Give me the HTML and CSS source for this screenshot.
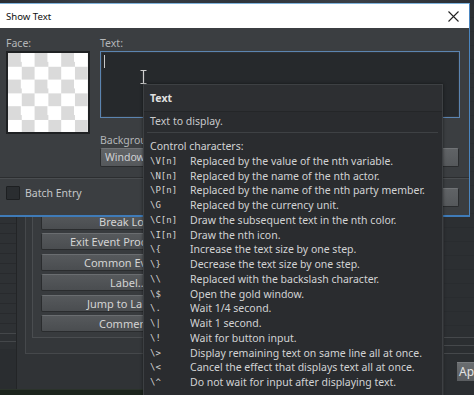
FILE: index.html
```html
<!DOCTYPE html>
<html>
<head>
<meta charset="utf-8">
<link rel="stylesheet" href="styles.css">
</head>
<body>
<div class="app">
  <div class="topstrip"></div>
  <div class="appmain">
    <div class="stripes">
      <div class="stripe-fill"></div>
      <div class="stripe-line"></div>
      <div class="stripe-line"></div>
    </div>
    <div class="outerpanel">
      <div class="innerpanel">
        <div class="cmdbtn"><span class="cmdtext">Break Loop</span></div>
        <div class="cmdbtn"><span class="cmdtext t-exit">Exit Event Processing</span></div>
        <div class="cmdbtn"><span class="cmdtext t-common">Common Event...</span></div>
        <div class="cmdbtn"><span class="cmdtext t-label">Label...</span></div>
        <div class="cmdbtn"><span class="cmdtext t-jump">Jump to Label...</span></div>
        <div class="cmdbtn"><span class="cmdtext t-comment">Comment...</span></div>
      </div>
    </div>
    <div class="rightcol">
      <div class="rc-fill"></div>
      <div class="rc-line"></div>
      <div class="rc-line"></div>
      <div class="rc-line"></div>
      <div class="apbtn">Apply</div>
    </div>
  </div>
  <div class="greenstrip"></div>

  <div class="dialog">
    <div class="titlebar">
      <span class="title">Show Text</span>
      <svg class="close" width="11" height="11" viewBox="0 0 11 11"><path d="M0.5 0.5L10.5 10.5M10.5 0.5L0.5 10.5" stroke="#222" stroke-width="1.1" fill="none"/></svg>
    </div>
    <div class="dbody">
      <div class="toprow">
        <div class="facecol">
          <div class="lbl">Face:</div>
          <div class="facebox"><div class="checker"></div></div>
        </div>
        <div class="textcol">
          <div class="lbl">Text:</div>
          <div class="textarea">
            <div class="caret"></div>
            <svg class="ibeam" width="7" height="14" viewBox="0 0 7 14"><path d="M0.5 0.5H6.5M3.5 0.5V13.5M0.5 13.5H6.5" stroke="#cfcfcf" stroke-width="1.2" fill="none"/></svg>
          </div>
          <div class="bgrow">
            <div class="bgcol">
              <div class="lbl">Background:</div>
              <div class="btn">Window</div>
            </div>
            <div class="btn">Preview...</div>
          </div>
        </div>
      </div>
      <div class="sep"></div>
      <div class="batchrow">
        <div class="check"></div>
        <span class="batchlbl">Batch Entry</span>
        <div class="btn okbtn">OK</div>
      </div>
    </div>
  </div>

  <div class="tooltip">
    <div class="tt-head">Text</div>
    <div class="tt-desc">Text to display.</div>
    <div class="tt-sep"></div>
    <div class="tt-list">
      <div class="tt-cc">Control characters:</div>
      <div class="cc"><span class="code">\V[n]</span><span class="txt">Replaced by the value of the nth variable.</span></div>
      <div class="cc"><span class="code">\N[n]</span><span class="txt">Replaced by the name of the nth actor.</span></div>
      <div class="cc"><span class="code">\P[n]</span><span class="txt">Replaced by the name of the nth party member.</span></div>
      <div class="cc"><span class="code">\G</span><span class="txt">Replaced by the currency unit.</span></div>
      <div class="cc"><span class="code">\C[n]</span><span class="txt">Draw the subsequent text in the nth color.</span></div>
      <div class="cc"><span class="code">\I[n]</span><span class="txt">Draw the nth icon.</span></div>
      <div class="cc"><span class="code">\{</span><span class="txt">Increase the text size by one step.</span></div>
      <div class="cc"><span class="code">\}</span><span class="txt">Decrease the text size by one step.</span></div>
      <div class="cc"><span class="code">\\</span><span class="txt">Replaced with the backslash character.</span></div>
      <div class="cc"><span class="code">\$</span><span class="txt">Open the gold window.</span></div>
      <div class="cc"><span class="code">\.</span><span class="txt">Wait 1/4 second.</span></div>
      <div class="cc"><span class="code">\|</span><span class="txt">Wait 1 second.</span></div>
      <div class="cc"><span class="code">\!</span><span class="txt">Wait for button input.</span></div>
      <div class="cc"><span class="code">\&gt;</span><span class="txt">Display remaining text on same line all at once.</span></div>
      <div class="cc"><span class="code">\&lt;</span><span class="txt">Cancel the effect that displays text all at once.</span></div>
      <div class="cc"><span class="code">\^</span><span class="txt">Do not wait for input after displaying text.</span></div>
    </div>
  </div>
</div>
</body>
</html>
```
FILE: styles.css
```css
* { box-sizing: border-box; }
html, body { margin: 0; padding: 0; }
body {
  width: 474px;
  height: 395px;
  overflow: hidden;
  background: #2c2f32;
  font-family: "Noto Sans", "Open Sans", sans-serif;
}
.app {
  position: relative;
  width: 474px;
  height: 395px;
  overflow: hidden;
  display: flex;
  flex-direction: column;
  background: #303336;
}
.topstrip {
  height: 4px;
  background: linear-gradient(90deg, #2a2d33 0%, #3a4048 20%, #2f343b 50%, #3b3f46 75%, #2a2e34 100%);
}
.appmain {
  flex: 1;
  display: flex;
  min-height: 0;
}
.stripes {
  width: 17px;
  flex-shrink: 0;
  display: flex;
  flex-direction: column;
  background: #2a2d30;
  border-right: 1px solid #232527;
}
.stripe-fill {
  height: 329px;
  background: repeating-linear-gradient(180deg, #2e3134 0 9px, #282a2d 9px 10px);
}
.stripe-line {
  height: 8px;
  border-top: 1px solid #44474a;
  background: #2d3033;
}
.outerpanel {
  width: 418px;
  flex-shrink: 0;
  margin-left: 8px;
  height: 350px;
  border-left: 1px solid #45484b;
  border-bottom: 1px solid #45484b;
  padding: 0 0 15px 6px;
  background: #34373a;
}
.innerpanel {
  height: 100%;
  border-left: 1px solid #4a4d50;
  border-bottom: 1px solid #4a4d50;
  background: #383b3e;
  display: flex;
  flex-direction: column;
  justify-content: flex-end;
  gap: 3.5px;
  padding: 0 0 5px 8px;
}
.cmdbtn {
  height: 17px;
  width: 220px;
  background: linear-gradient(180deg, #56595c, #4a4d50);
  border: 1px solid #2a2c2e;
  border-top-color: #6a6d70;
  border-radius: 2px;
  position: relative;
  color: #d4d4d4;
  font-size: 11px;
  line-height: 15px;
}
.cmdtext { position: absolute; top: 0; left: 57px; white-space: nowrap; }
.t-exit { left: 28px; }
.t-common { left: 42px; }
.t-label { left: 68px; }
.t-jump { left: 45px; }
.t-comment { left: 57px; }
.rightcol {
  flex: 1;
  min-width: 0;
  overflow: hidden;
  display: flex;
  flex-direction: column;
  background: #2b2e31;
  border-left: 1px solid #3c3f42;
}
.rc-fill {
  height: 333px;
  flex-shrink: 0;
  background: repeating-linear-gradient(180deg, #2c2f32 0 13px, #292c2f 13px 14px);
}
.rc-line { height: 8px; flex-shrink: 0; border-top: 1px solid #45484b; }
.apbtn {
  flex-shrink: 0;
  margin-top: 1px;
  margin-left: 13px;
  width: 40px;
  height: 19px;
  background: linear-gradient(180deg, #6a6d70, #5a5d60);
  border-top: 1px solid #7a7d80;
  color: #e4e4e4;
  font-size: 12px;
  line-height: 17px;
  padding-left: 2px;
  white-space: nowrap;
  overflow: hidden;
}
.greenstrip {
  position: absolute;
  left: 0;
  bottom: 0;
  width: 145px;
  height: 6px;
  background: #1c241d;
  border-top: 1px solid #2b332b;
}

/* Dialog window */
.dialog {
  position: absolute;
  left: 0;
  top: 3px;
  width: 470px;
  height: 214px;
  border-top: 1px solid #7fb3dc;
  border-right: 1px solid #4b86c0;
  border-bottom: 2px solid #3f7bb8;
  display: flex;
  flex-direction: column;
  background: #3b3e41;
  overflow: hidden;
}
.titlebar {
  height: 24px;
  background: #ffffff;
  display: flex;
  align-items: center;
  justify-content: space-between;
  padding: 0 10px 0 6px;
  flex-shrink: 0;
}
.title {
  font-family: "Noto Sans", sans-serif;
  font-size: 9.6px;
  color: #111;
}
.close { display: block; }
.dbody {
  flex: 1;
  padding: 8px 9px 0 6px;
  display: flex;
  flex-direction: column;
}
.lbl {
  font-size: 10.5px;
  line-height: 14px;
  height: 14px;
  color: #b4b6b8;
  white-space: nowrap;
}
.toprow {
  display: flex;
  gap: 10px;
  align-items: flex-start;
}
.facecol { width: 84px; }
.facebox {
  margin-top: 1px;
  height: 83px;
  border: 2px solid #1f2123;
  background: #fff;
}
.checker {
  width: 100%;
  height: 100%;
  background: repeating-conic-gradient(#ffffff 0 25%, #dadada 0 50%) 0 0 / 26.6px 26.6px;
}
.textcol { flex: 1; min-width: 0; }
.textarea {
  margin-top: 1px;
  height: 67px;
  border: 1px solid #5b84b0;
  background: #26292c;
  position: relative;
  box-shadow: inset 0 0 0 1px #2f3236;
}
.caret {
  position: absolute;
  left: 3px;
  top: 3px;
  width: 1px;
  height: 13px;
  background: #c8c8c8;
}
.ibeam { position: absolute; left: 39px; top: 18px; }
.bgrow {
  display: flex;
  align-items: flex-end;
  justify-content: space-between;
  margin-top: 15px;
  padding-right: 1px;
}
.bgcol { display: flex; flex-direction: column; gap: 1px; }
.btn {
  height: 19px;
  background: linear-gradient(180deg, #606366, #55585b);
  border: 1px solid #2a2c2e;
  border-top-color: #707376;
  border-radius: 2px;
  color: #cfd1d3;
  font-size: 10.5px;
  line-height: 16px;
  padding: 0 4px;
  width: 80px;
  white-space: nowrap;
  overflow: hidden;
}
.sep {
  margin: 10px -9px 0 -6px;
  height: 2px;
  border-top: 1px solid #2c2e30;
  border-bottom: 1px solid #4a4d50;
}
.batchrow {
  display: flex;
  align-items: flex-start;
  margin-top: 7px;
  padding-right: 1px;
}
.check {
  width: 14px;
  height: 14px;
  background: #2a2d30;
  border: 1px solid #1d1f21;
  border-radius: 1px;
}
.batchlbl {
  margin-left: 5px;
  font-size: 10.5px;
  line-height: 14px;
  color: #c4c6c8;
  flex: 1;
}
.okbtn { margin-top: 2px; }

/* Tooltip */
.tooltip {
  position: absolute;
  left: 143px;
  top: 84px;
  width: 300px;
  height: 320px;
  background: #2a2c2f;
  border: 1px solid #3d4043;
  color: #d2d3d4;
  font-size: 10.5px;
  box-shadow: 0 0 3px rgba(0,0,0,0.5);
}
.tt-head {
  height: 27px;
  line-height: 27px;
  padding-left: 6px;
  font-weight: bold;
  color: #e0e0e0;
  background: #2d2f32;
  border-bottom: 1px solid #242628;
}
.tt-desc {
  line-height: 16px;
  padding: 1px 0 0 6px;
  color: #c8c9ca;
}
.tt-sep {
  margin: 3px 4px 0 3px;
  height: 1px;
  background: #3e4144;
}
.tt-list {
  padding: 0 0 0 6px;
  margin-top: 6px;
}
.tt-cc {
  line-height: 14.75px;
  height: 14.75px;
  white-space: nowrap;
}
.cc {
  display: grid;
  grid-template-columns: 40px 1fr;
  height: 14.75px;
}
.cc > span {
  display: block;
  height: 14.75px;
  line-height: 14.75px;
  overflow: hidden;
  white-space: nowrap;
}
.code {
  font-family: "DejaVu Sans Mono", monospace;
  font-size: 9px;
  color: #d4d4d4;
}
```
